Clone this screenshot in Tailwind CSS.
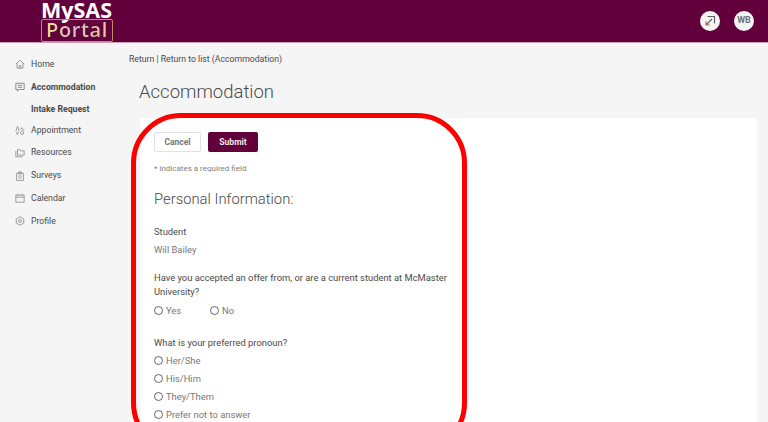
<!DOCTYPE html>
<html lang="en">
<head>
  <meta charset="UTF-8" />
  <title>MySAS Portal</title>
  <script src="https://cdn.jsdelivr.net/npm/@tailwindcss/browser@4"></script>
</head>
<body class="w-[768px] h-[422px] overflow-hidden bg-[#f5f5f5] font-['Roboto',sans-serif] text-[#4a4a4a] relative">
  <!-- header -->
  <header class="h-[43px] bg-[#61003b] border-b border-[#c9a0b6] flex items-start justify-between pl-[41px] pr-[14px]">
    <div class="w-[72px] h-[42px] flex flex-col">
      <div class="h-[19px] text-[21.500px] leading-[19px] font-bold text-white font-['Open_Sans',sans-serif] whitespace-nowrap">MySAS</div>
      <div class="h-[23px] border border-[#c98a5e] rounded-[2px] text-center text-[20px] leading-[20px] font-semibold tracking-[0.6px] font-['Open_Sans',sans-serif]">
        <span class="bg-gradient-to-r from-[#ecd68a] via-[#cdbcc8] to-[#e6cf8c] bg-clip-text text-transparent">Portal</span>
      </div>
    </div>
    <div class="flex items-center gap-[13px] mt-[11px]">
      <div class="w-[20px] h-[20px] rounded-full bg-[#f4f4f4] flex items-center justify-center -translate-x-px">
        <svg class="w-[12px] h-[12px]" viewBox="0 0 12 12" fill="none" stroke="#5a5a5a" stroke-width="1.100">
          <path d="M3.500 1.500h7v7" />
          <path d="M8 4 2.500 9.500" />
          <path d="M2 6.500V10h3.500" stroke="#b5532f" />
        </svg>
      </div>
      <div class="w-[20px] h-[20px] rounded-full bg-[#f4f4f4] flex items-center justify-center text-[9px] font-bold text-[#707070]">WB</div>
    </div>
  </header>

  <div class="flex">
    <!-- sidebar -->
    <nav class="w-[129px] shrink-0 pl-[15px] pt-[10px] text-[8.700px] leading-[22.800px] text-[#4a4a4a]">
      <a class="flex items-center gap-[6px]">
        <svg class="w-[10px] h-[10px] shrink-0" viewBox="0 0 12 12" fill="none" stroke="#8a8a8a" stroke-width="1"><path d="M1 6 6 1.500 11 6M2.500 5v6h7V5M5 11V8h2v3" /></svg>
        <span>Home</span>
      </a>
      <a class="flex items-center gap-[6px] font-bold">
        <svg class="w-[10px] h-[10px] shrink-0" viewBox="0 0 12 12" fill="none" stroke="#777" stroke-width="1"><path d="M1 1.500h10v7.500H5l-2 2V9H1zM3.500 4h5M3.500 6.300h5" /></svg>
        <span>Accommodation</span>
      </a>
      <a class="block pl-[16px] font-bold leading-[20px]">Intake Request</a>
      <a class="flex items-center gap-[6px]">
        <svg class="w-[10px] h-[10px] shrink-0" viewBox="0 0 12 12" fill="none" stroke="#8a8a8a" stroke-width="1"><path d="M1 7.500 3 1.500l2 6M7 5.500 8 3l1 3M10.500 5v2" /><circle cx="8.500" cy="9.500" r="1.800" /><circle cx="3" cy="10" r="1.200" /></svg>
        <span>Appointment</span>
      </a>
      <a class="flex items-center gap-[6px]">
        <svg class="w-[10px] h-[10px] shrink-0" viewBox="0 0 12 12" fill="none" stroke="#8a8a8a" stroke-width="1"><path d="M1 3.500V10.500h8M3 2h3l1 1.500h4V8.500H3z" /></svg>
        <span>Resources</span>
      </a>
      <a class="flex items-center gap-[6px]">
        <svg class="w-[10px] h-[10px] shrink-0" viewBox="0 0 12 12" fill="none" stroke="#8a8a8a" stroke-width="1"><path d="M2 2.500h8v9H2zM4.500 1h3v2.500h-3zM4 6h4M4 8.500h4" /></svg>
        <span>Surveys</span>
      </a>
      <a class="flex items-center gap-[6px]">
        <svg class="w-[10px] h-[10px] shrink-0" viewBox="0 0 12 12" fill="none" stroke="#8a8a8a" stroke-width="1"><path d="M1 2.500h10v8.500H1zM1 5h10M3.500 1v2M8.500 1v2" /></svg>
        <span>Calendar</span>
      </a>
      <a class="flex items-center gap-[6px]">
        <svg class="w-[10px] h-[10px] shrink-0" viewBox="0 0 12 12" fill="none" stroke="#8a8a8a" stroke-width="1"><path d="M6 1 10.500 3.500v5L6 11 1.500 8.500v-5z" /><circle cx="6" cy="6" r="1.700" /></svg>
        <span>Profile</span>
      </a>
    </nav>

    <!-- main -->
    <main class="flex-1 pr-[11px]">
      <p class="text-[8.700px] leading-[12px] mt-[10px]">Return | Return to list (Accommodation)</p>
      <h1 class="ml-[10px] mt-[13px] text-[18.500px] leading-[28px] font-light text-[#4a4a4a]">Accommodation</h1>
      <section class="ml-[11px] mt-[12px] bg-white rounded-[3px] pl-[14px] pt-[14px] w-[617px] h-[400px]">
        <div class="flex gap-[7px]">
          <button class="w-[47px] h-[20px] bg-white border border-[#e2e2e2] rounded-[2px] text-[8.500px] font-bold text-[#777]">Cancel</button>
          <button class="w-[50px] h-[20px] bg-[#61003b] rounded-[2px] text-[8.500px] font-bold text-[#f3e6ee]">Submit</button>
        </div>
        <p class="mt-[12px] text-[8px] leading-[10px] text-[#808080]">* indicates a required field</p>
        <h2 class="mt-[15px] text-[14.800px] leading-[20px] font-light text-[#4a4a4a]">Personal Information:</h2>

        <p class="mt-[17px] text-[9.400px] leading-[12px]">Student</p>
        <p class="mt-[6px] text-[9.400px] leading-[12px] text-[#777]">Will Bailey</p>

        <p class="mt-[15px] w-[300px] text-[9.400px] leading-[14px]">Have you accepted an offer from, or are a current student at McMaster University?</p>
        <div class="mt-[6px] flex text-[9.400px] leading-[12px] text-[#777]">
          <label class="w-[56px] flex items-center gap-[3px]"><span class="w-[9px] h-[9px] rounded-full border border-[#666] -translate-y-px"></span>Yes</label>
          <label class="flex items-center gap-[3px]"><span class="w-[9px] h-[9px] rounded-full border border-[#666] -translate-y-px"></span>No</label>
        </div>

        <p class="mt-[20px] text-[9.400px] leading-[12px]">What is your preferred pronoun?</p>
        <div class="mt-[6px] flex flex-col gap-[6px] text-[9.400px] leading-[12px] text-[#777]">
          <label class="flex items-center gap-[3px]"><span class="w-[9px] h-[9px] rounded-full border border-[#666] -translate-y-px"></span>Her/She</label>
          <label class="flex items-center gap-[3px]"><span class="w-[9px] h-[9px] rounded-full border border-[#666] -translate-y-px"></span>His/Him</label>
          <label class="flex items-center gap-[3px]"><span class="w-[9px] h-[9px] rounded-full border border-[#666] -translate-y-px"></span>They/Them</label>
          <label class="flex items-center gap-[3px]"><span class="w-[9px] h-[9px] rounded-full border border-[#666] -translate-y-px"></span>Prefer not to answer</label>
        </div>
      </section>
    </main>
  </div>

  <!-- red annotation drawn over the screenshot -->
  <div class="absolute left-[131px] top-[113px] w-[336px] h-[340px] border-[5px] border-[#ff0000] rounded-[50px] pointer-events-none"></div>
</body>
</html>
